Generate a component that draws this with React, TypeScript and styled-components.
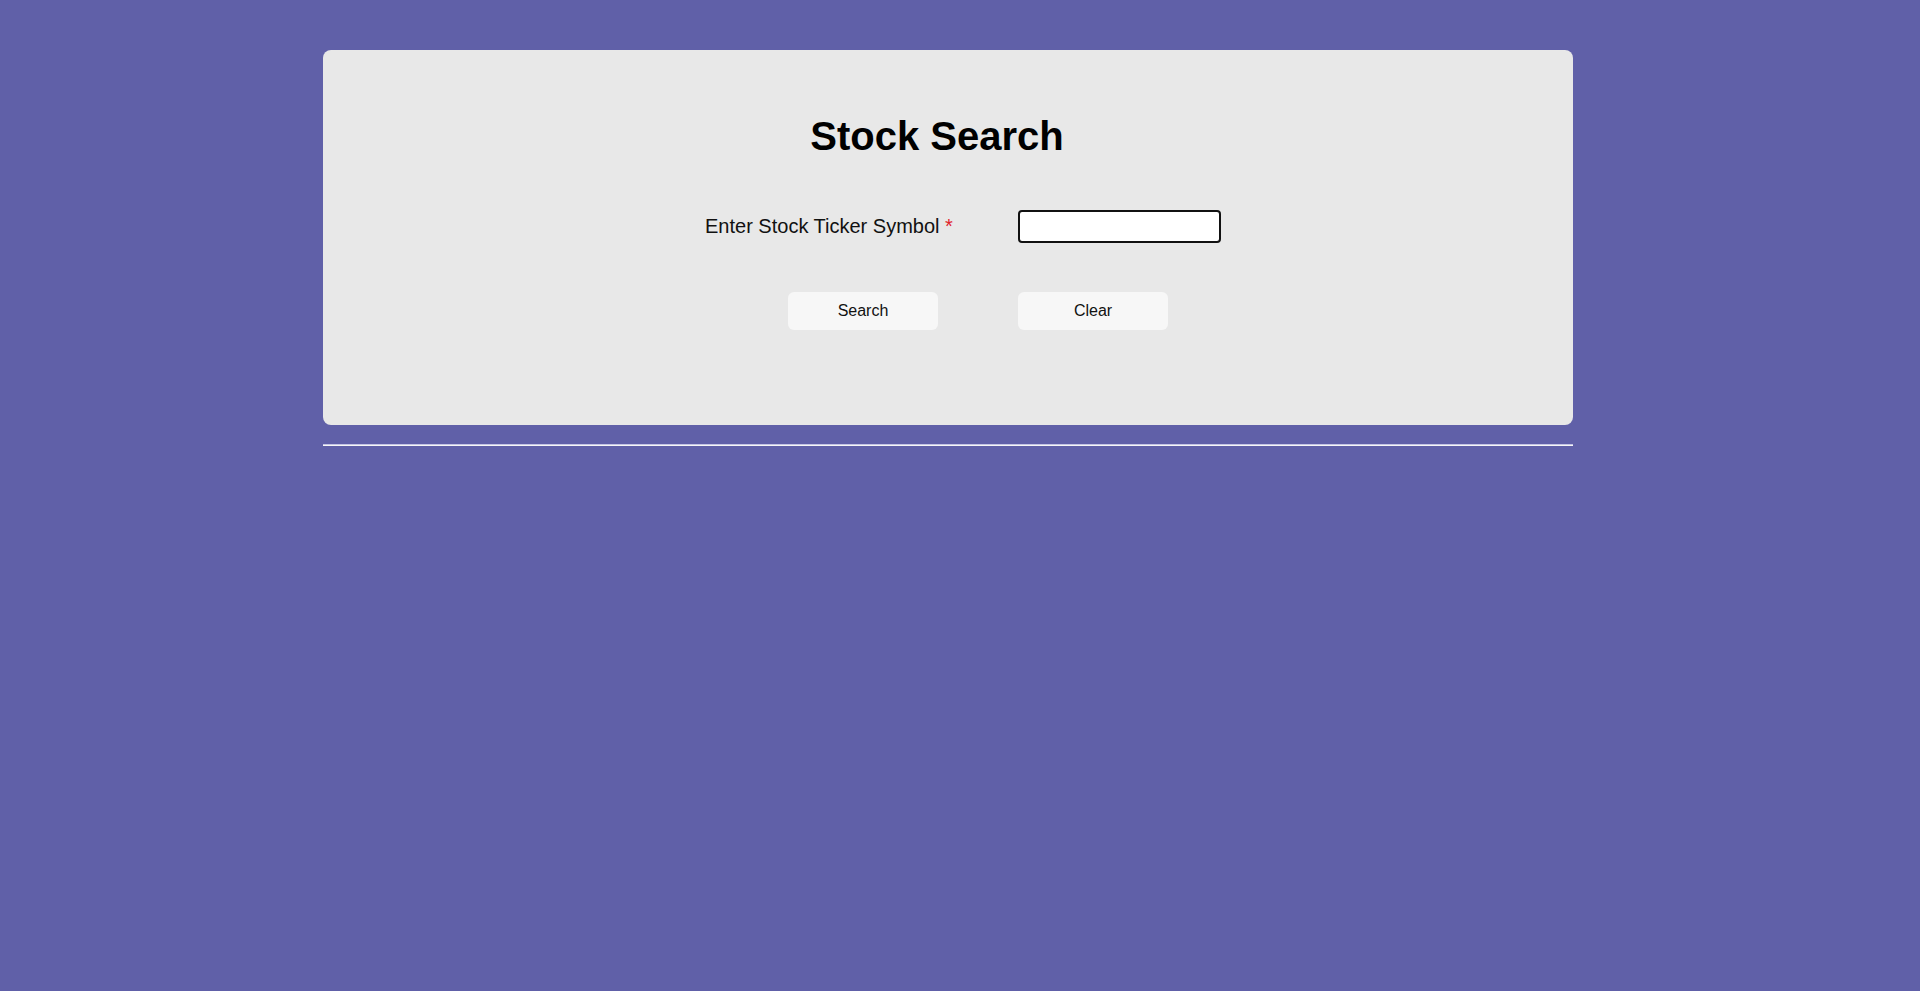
import React from 'react';
import styled, { createGlobalStyle } from 'styled-components';

const GlobalStyle = createGlobalStyle`
  html, body {
    margin: 0;
    padding: 0;
    background-color: #6060a8;
    font-family: "Liberation Sans", Arial, sans-serif;
  }
`;

const Page = styled.div`
  min-height: 991px;
  padding-top: 50px;
  box-sizing: border-box;
`;

const Wrapper = styled.div`
  width: 1250px;
  margin-left: 323px;
`;

const Card = styled.div`
  background-color: #e8e8e8;
  border-radius: 8px;
  height: 375px;
  padding-top: 63px;
  box-sizing: border-box;
`;

const Title = styled.h1`
  margin: 0;
  padding-right: 22px;
  font-size: 40px;
  line-height: 46px;
  font-weight: bold;
  text-align: center;
  color: #000;
`;

const Form = styled.form`
  display: grid;
  grid-template-columns: 313px 204px;
  row-gap: 49px;
  align-items: center;
  margin: 51px 0 0 382px;
`;

const Label = styled.label`
  font-size: 20px;
  line-height: 24px;
  padding-bottom: 2px;
  color: #111;
`;

const Required = styled.span`
  color: #e0222b;
`;

const Input = styled.input`
  width: 203px;
  height: 33px;
  box-sizing: border-box;
  border: 2px solid #111;
  border-radius: 4px;
  background: #fff;
  padding: 0 4px;
  font-size: 16px;
  font-family: inherit;
  outline: none;
`;

const Button = styled.button<{ $last?: boolean }>`
  width: 150px;
  height: 38px;
  border: none;
  border-radius: 6px;
  background-color: #f7f7f7;
  color: #111;
  font-size: 16px;
  font-family: inherit;
  cursor: pointer;
  justify-self: ${(p) => (p.$last ? 'start' : 'end')};
  margin-right: ${(p) => (p.$last ? '0' : '80px')};
`;

const Divider = styled.hr`
  margin: 19px 0 0;
  height: 0;
  border: none;
  border-top: 1px solid #c4c4e4;
  border-bottom: 1px solid #f6f6f6;
`;

const App: React.FC = () => {
  return (
    <Page>
      <GlobalStyle />
      <Wrapper>
        <Card>
          <Title>Stock Search</Title>
          <Form onSubmit={(e) => e.preventDefault()}>
            <Label htmlFor="ticker">
              Enter Stock Ticker Symbol <Required>*</Required>
            </Label>
            <Input id="ticker" type="text" autoFocus />
            <Button type="submit">Search</Button>
            <Button type="reset" $last>
              Clear
            </Button>
          </Form>
        </Card>
        <Divider />
      </Wrapper>
    </Page>
  );
};

export default App;
